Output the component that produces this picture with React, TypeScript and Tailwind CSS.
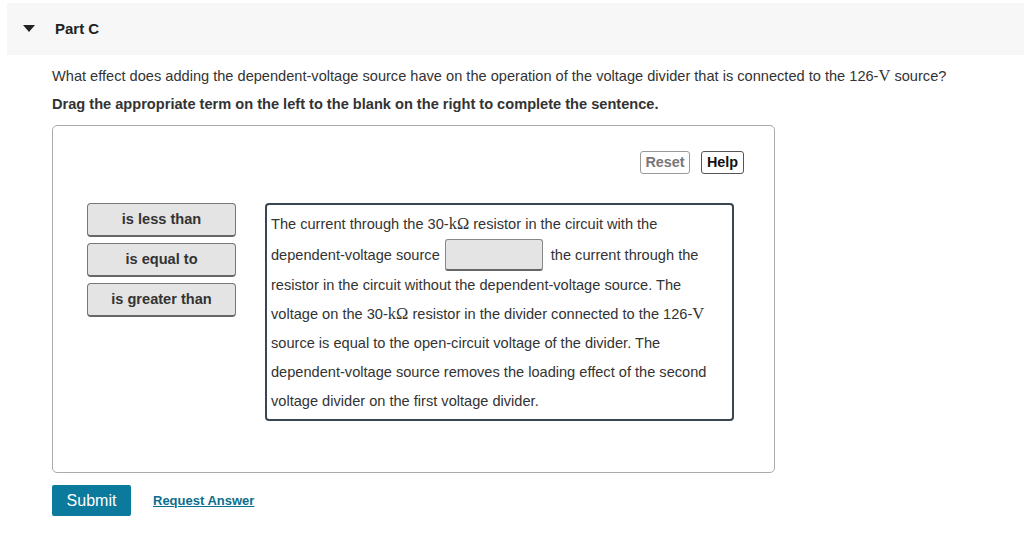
import React from "react";

const M = ({ children }: { children: React.ReactNode }) => (
  <span className="font-['Liberation_Serif',serif] text-[16.5px] leading-[1]">{children}</span>
);

export default function App() {
  const terms = ["is less than", "is equal to", "is greater than"];
  return (
    <div className="w-[1024px] h-[548px] bg-white pt-[3px] pl-[7px] font-['Liberation_Sans',Arial,sans-serif] text-[#333]">
      <div className="h-[52px] bg-[#f7f7f7] flex items-center">
        <svg width="12" height="8" viewBox="0 0 12 8" className="ml-[16px]">
          <polygon points="0,0 12,0 6,7" fill="#222" />
        </svg>
        <span className="ml-[20px] text-[15px] font-bold text-[#222]">Part C</span>
      </div>
      <div className="pl-[45px]">
        <p className="mt-[11px] text-[14.6px] leading-[20px] text-[#333]">
          What effect does adding the dependent-voltage source have on the operation of the voltage divider that is connected to the 126-<M>V</M> source?
        </p>
        <p className="mt-[8px] text-[14.6px] leading-[20px] font-bold text-[#333]">
          Drag the appropriate term on the left to the blank on the right to complete the sentence.
        </p>
        <div className="mt-[11px] w-[723px] h-[348px] border border-[#aaa] rounded-[5px] pt-[25px] pr-[30px] pl-[34px]">
          <div className="flex justify-end gap-[11px]">
            <button className="w-[50px] h-[23px] border border-[#999] rounded-[3px] text-[14.4px] font-bold text-[#777] leading-none">
              Reset
            </button>
            <button className="w-[43px] h-[23px] border border-[#555] rounded-[3px] text-[14.4px] font-bold text-[#111] leading-none">
              Help
            </button>
          </div>
          <div className="mt-[29px] flex items-start">
            <div className="flex flex-col gap-[6px]">
              {terms.map((t) => (
                <div
                  key={t}
                  className="w-[149px] h-[34px] bg-[#e4e4e4] border border-[#777] border-b-2 border-b-[#666] rounded-[4px] flex items-center justify-center text-[14.6px] font-bold text-[#333]"
                >
                  {t}
                </div>
              ))}
            </div>
            <div className="ml-[29px] w-[469px] h-[218px] border-2 border-[#3a4650] rounded-[4px] pl-[4px] pt-[5px] text-[14.6px] leading-[29px] text-[#333]">
              <div>
                The current through the 30-<M>kΩ</M> resistor in the circuit with the
              </div>
              <div className="h-[32px] flex items-center">
                <span>dependent-voltage source</span>
                <span className="ml-[5px] mr-[8px] inline-block w-[98px] h-[32px] bg-[#e4e4e4] border border-[#888] border-b-2 border-b-[#666] rounded-[3px]" />
                <span>the current through the</span>
              </div>
              <div>resistor in the circuit without the dependent-voltage source. The</div>
              <div>
                voltage on the 30-<M>kΩ</M> resistor in the divider connected to the 126-<M>V</M>
              </div>
              <div>source is equal to the open-circuit voltage of the divider. The</div>
              <div>dependent-voltage source removes the loading effect of the second</div>
              <div>voltage divider on the first voltage divider.</div>
            </div>
          </div>
        </div>
        <div className="mt-[12px] flex items-center">
          <button className="w-[79px] h-[31px] bg-[#0b7a9c] rounded-[2px] text-white text-[16px]">
            Submit
          </button>
          <a className="ml-[22px] text-[13px] font-bold text-[#0a6e8e] underline">Request Answer</a>
        </div>
      </div>
    </div>
  );
}
